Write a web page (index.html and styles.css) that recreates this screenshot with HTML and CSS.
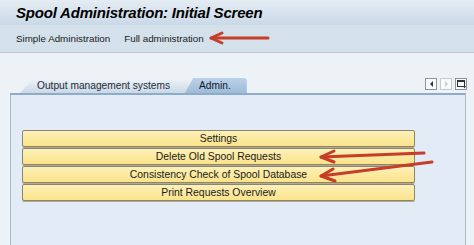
FILE: index.html
```html
<!DOCTYPE html>
<html lang="en">
<head>
  <meta charset="UTF-8">
  <title>Spool Administration: Initial Screen</title>
  <link rel="stylesheet" href="styles.css">
</head>
<body>
  <header class="title-bar">
    <h1>Spool Administration: Initial Screen</h1>
  </header>

  <nav class="toolbar">
    <span class="menu-item">Simple Administration</span>
    <span class="menu-item">Full administration</span>
  </nav>

  <main class="content">
    <div class="tab-strip">
      <div class="tabs">
        <div class="tab">Output management systems</div>
        <div class="tab active">Admin.</div>
      </div>
      <div class="tab-nav">
        <span class="nav-btn"><span class="tri-left"></span></span>
        <span class="nav-btn disabled"><span class="tri-right"></span></span>
        <span class="nav-btn">
          <svg width="9" height="9" viewBox="0 0 9 9">
            <rect x="0.5" y="0.5" width="7" height="6" fill="none" stroke="#333" stroke-width="1"/>
            <rect x="0.5" y="0.5" width="7" height="1.5" fill="#333"/>
            <path d="M6 6 L9 6 L7.5 8.5 Z" fill="#333"/>
          </svg>
        </span>
      </div>
    </div>

    <div class="tab-panel">
      <div class="button-list">
        <button class="sap-button">Settings</button>
        <button class="sap-button">Delete Old Spool Requests</button>
        <button class="sap-button">Consistency Check of Spool Database</button>
        <button class="sap-button">Print Requests Overview</button>
      </div>
    </div>
  </main>

  <!-- annotation arrows drawn over the screenshot -->
  <svg class="arrows" width="474" height="245" viewBox="0 0 474 245">
    <g stroke="#c63d2a" stroke-width="3" stroke-linecap="round" stroke-linejoin="round" fill="none">
      <path d="M268 38 L211 38"/>
      <path d="M222 33 L211 38 L222 43"/>
      <path d="M424 153 L321 157"/>
      <path d="M334 151 L321 157 L334 162"/>
      <path d="M432 162 L321 176"/>
      <path d="M333 169 L321 176 L335 181"/>
    </g>
  </svg>
</body>
</html>
```

FILE: styles.css
```css
body {
  margin: 0;
  padding: 0;
  font-family: 'Liberation Sans', Arial, sans-serif;
  background: #edf2f7;
  color: #1f2b38;
  overflow: hidden;
}

.title-bar {
  height: 25px;
  background: linear-gradient(#e4ecf4, #cad9e7);
  padding-left: 16px;
  display: flex;
  align-items: center;
}

.title-bar h1 {
  margin: 0;
  font-size: 15px;
  font-style: italic;
  font-weight: bold;
  color: #000;
  letter-spacing: -0.2px;
}

.toolbar {
  height: 27px;
  background: #d4e1eb;
  border-bottom: 1px solid #b7c7d6;
  padding-left: 16px;
  display: flex;
  align-items: center;
  gap: 14px;
  font-size: 9.8px;
  color: #1a1a1a;
}

.content {
  padding: 25px 0 0 10px;
}

.tab-strip {
  width: 456px;
  height: 15px;
  display: flex;
  justify-content: space-between;
  align-items: flex-end;
}

.tabs {
  display: flex;
  padding-left: 10px;
  height: 15px;
}

.tab {
  height: 15px;
  line-height: 15px;
  font-size: 10.2px;
  color: #1f2b38;
  padding: 0 20px 0 17px;
  background: linear-gradient(#f0f4f8, #c9d8e7);
  clip-path: polygon(14px 0, calc(100% - 3px) 0, 100% 3px, 100% 100%, 0 100%);
}

.tab.active {
  margin-left: -5px;
  padding: 0 16px 0 14px;
  background: linear-gradient(#bcd1e6, #9ebbd9);
  clip-path: polygon(8px 0, calc(100% - 2px) 0, 100% 2px, 100% 100%, 0 100%);
  color: #0c1a2a;
}

.tab-nav {
  display: flex;
  gap: 3px;
  padding-bottom: 3px;
  margin-right: -1px;
}

.nav-btn {
  width: 10px;
  height: 10px;
  border: 1px solid #8896a4;
  background: #f7f9fb;
  display: flex;
  align-items: center;
  justify-content: center;
}

.tri-left {
  width: 0;
  height: 0;
  border-top: 3px solid transparent;
  border-bottom: 3px solid transparent;
  border-right: 3px solid #333;
}

.tri-right {
  width: 0;
  height: 0;
  border-top: 3px solid transparent;
  border-bottom: 3px solid transparent;
  border-left: 3px solid #c5ccd3;
}

.nav-btn.disabled {
  border-color: #c3ccd5;
}

.tab-panel {
  width: 456px;
  height: 160px;
  border: 1px solid #a9bccf;
  border-top: 2px solid #8eabc8;
  background: #e3ecf6;
  padding: 35px 0 0 11px;
  box-sizing: border-box;
}

.button-list {
  width: 393px;
  display: flex;
  flex-direction: column;
  gap: 1px;
}

.sap-button {
  height: 17px;
  padding: 0;
  border: 1px solid #8b8470;
  border-radius: 2px;
  background: linear-gradient(#fdf1b8, #fbe38a);
  font-family: 'Liberation Sans', Arial, sans-serif;
  font-size: 10.4px;
  color: #1a1a1a;
  box-shadow: 0 1px 0 #b5ab88;
}

.arrows {
  position: absolute;
  left: 0;
  top: 0;
  pointer-events: none;
}
```
